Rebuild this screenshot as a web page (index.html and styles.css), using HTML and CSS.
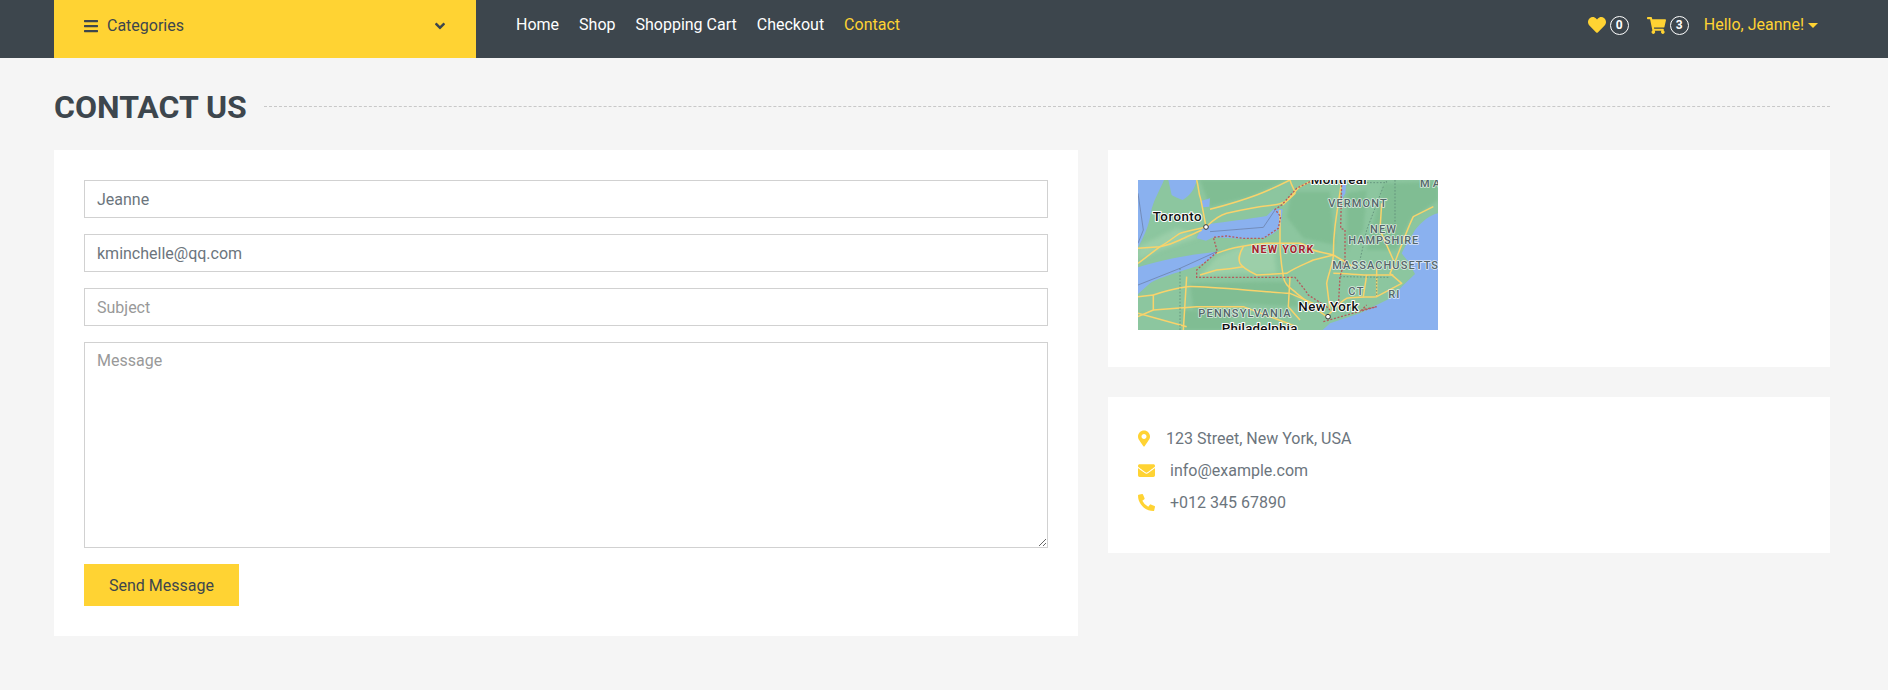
FILE: index.html
```html
<!DOCTYPE html>
<html lang="en">
<head>
<meta charset="utf-8">
<title>Contact</title>
<link rel="stylesheet" href="styles.css">
</head>
<body>
<header class="navbar">
  <div class="categories">
    <svg class="ico ico-bars" viewBox="0 0 448 512"><path d="M16 132h416c8.837 0 16-7.163 16-16V76c0-8.837-7.163-16-16-16H16C7.163 60 0 67.163 0 76v40c0 8.837 7.163 16 16 16zm0 160h416c8.837 0 16-7.163 16-16v-40c0-8.837-7.163-16-16-16H16c-8.837 0-16 7.163-16 16v40c0 8.837 7.163 16 16 16zm0 160h416c8.837 0 16-7.163 16-16v-40c0-8.837-7.163-16-16-16H16c-8.837 0-16 7.163-16 16v40c0 8.837 7.163 16 16 16z"/></svg>
    <span class="categories-label">Categories</span>
    <svg class="ico ico-angle" viewBox="0 0 320 512"><path d="M143 352.3L7 216.3c-9.4-9.4-9.4-24.6 0-33.9l22.6-22.6c9.4-9.4 24.6-9.4 33.9 0l96.4 96.4 96.4-96.4c9.4-9.4 24.6-9.4 33.9 0l22.6 22.6c9.4 9.4 9.4 24.6 0 33.9l-136 136c-9.2 9.4-24.4 9.4-33.8 0z"/></svg>
  </div>
  <nav class="nav-links">
    <a class="nav-link">Home</a>
    <a class="nav-link">Shop</a>
    <a class="nav-link">Shopping Cart</a>
    <a class="nav-link">Checkout</a>
    <a class="nav-link active">Contact</a>
  </nav>
  <div class="nav-right">
    <a class="nav-icon">
      <svg class="ico ico-heart" viewBox="0 0 512 512"><path d="M462.3 62.6C407.5 15.9 326 24.3 275.7 76.2L256 96.5l-19.7-20.3C186.1 24.3 104.5 15.9 49.7 62.6c-62.8 53.6-66.1 149.8-9.9 207.9l193.5 199.8c12.5 12.9 32.8 12.9 45.3 0l193.5-199.8c56.3-58.1 53-154.3-9.8-207.9z"/></svg>
      <span class="badge">0</span>
    </a>
    <a class="nav-icon nav-icon-cart">
      <svg class="ico ico-cart" viewBox="0 0 576 512"><path d="M528.12 301.319l47.273-208C578.806 78.301 567.391 64 551.99 64H159.208l-9.166-44.81C147.758 8.021 137.93 0 126.529 0H24C10.745 0 0 10.745 0 24v16c0 13.255 10.745 24 24 24h69.883l70.248 343.435C147.325 417.1 136 435.222 136 456c0 30.928 25.072 56 56 56s56-25.072 56-56c0-15.674-6.447-29.835-16.824-40h209.647C430.447 426.165 424 440.326 424 456c0 30.928 25.072 56 56 56s56-25.072 56-56c0-22.172-12.888-41.332-31.579-50.405l5.517-24.276c3.413-15.018-8.002-29.319-23.403-29.319H218.117l-6.545-32h293.145c11.206 0 20.92-7.754 23.403-18.681z"/></svg>
      <span class="badge">3</span>
    </a>
    <a class="user-menu">Hello, Jeanne!<span class="caret"></span></a>
  </div>
</header>

<main class="page">
  <h2 class="section-title"><span class="section-title-text">CONTACT US</span><span class="section-title-line"></span></h2>
  <div class="columns">
    <form class="card form-card">
      <input class="field" type="text" value="Jeanne" placeholder="Name">
      <input class="field" type="email" value="kminchelle@qq.com" placeholder="Email">
      <input class="field" type="text" placeholder="Subject">
      <textarea class="field field-message" placeholder="Message"></textarea>
      <button class="send-btn" type="button">Send Message</button>
    </form>
    <div class="side">
      <section class="card map-card">
        <svg class="map" viewBox="114 90 900 450" preserveAspectRatio="xMidYMid slice">
          <rect class="m-land" x="114" y="90" width="900" height="450"/>
          <g class="m-forests">
            <path d="M575 125 L690 125 L705 285 L610 265 L560 200 Z"/>
            <path d="M740 130 L800 120 L790 240 L740 300 Z"/>
            <path d="M850 100 L1014 95 L1014 150 L930 210 L890 300 L800 300 Z"/>
            <path d="M270 400 L560 395 L600 470 L420 460 L280 480 Z"/>
            <path d="M250 480 L400 490 L380 540 L250 540 Z"/>
            <path d="M300 90 L560 90 L450 140 L330 170 Z"/>
          </g>
          <g class="m-lights">
            <path d="M114 290 L230 235 L300 260 L180 300 L114 330 Z"/>
            <path d="M350 320 L430 285 L520 290 L530 370 L420 370 L300 380 Z"/>
          </g>
          <g class="m-waters">
            <path d="M114 90 L192 90 C180 120 160 150 152 190 C148 225 130 265 114 292 Z"/>
            <path d="M205 90 L290 90 C285 115 272 135 248 150 C235 145 222 140 215 135 Z"/>
            <path d="M305 152 L330 145 L328 170 L308 172 Z"/>
            <path d="M290 265 C295 250 305 232 330 222 C380 215 440 208 500 198 L522 176 L548 178 L542 230 C530 245 515 255 495 263 L430 266 L340 262 L318 272 Z"/>
            <path d="M114 352 C170 335 250 315 352 305 C335 325 320 335 300 345 C260 360 180 380 150 400 L114 432 Z"/>
            <path d="M726 90 L740 90 L736 130 L725 150 Z"/>
            <path d="M1014 190 C990 195 965 215 945 240 C935 260 925 270 905 310 L925 335 L945 372 L905 410 L880 440 L780 490 L690 520 L668 540 L1014 540 Z"/>
          </g>
          <g class="m-roads">
            <path d="M318 231 C345 205 360 195 380 190 S470 170 520 165 S570 135 600 110 L640 90"/>
            <path d="M290 90 C296 110 296 130 300 140 S312 200 318 231"/>
            <path d="M330 178 C380 165 430 150 470 135 S550 100 570 90 C575 110 585 120 585 130 L548 165"/>
            <path d="M318 231 C280 240 250 245 240 250 S200 280 180 290 L114 340"/>
            <path d="M114 295 L180 290 C205 285 220 280 240 270 S285 250 305 240"/>
            <path d="M350 310 C380 298 400 293 420 290 S470 282 500 280 L600 280 C620 285 630 295 640 300 S680 310 700 315 L760 350"/>
            <path d="M540 180 L540 280 C540 320 545 350 550 380 S575 415 590 430 L640 470 L680 500"/>
            <path d="M430 290 C418 310 415 330 420 340 S450 365 470 375 L560 370 C590 350 620 340 640 330 L700 315"/>
            <path d="M430 350 C400 355 370 358 350 360 L300 375"/>
            <path d="M725 95 C718 140 710 190 705 230 S700 290 700 315 S685 370 680 400 L690 480"/>
            <path d="M700 370 C740 370 770 375 800 375 L880 375"/>
            <path d="M680 500 C700 480 720 455 740 445 C770 440 800 442 830 440 L905 400 L870 370 C880 350 885 335 895 310 S925 230 940 200 L1000 170"/>
            <path d="M845 160 L840 240 L880 330"/>
            <path d="M114 440 L160 435 L160 480 L114 500"/>
            <path d="M160 435 C200 420 230 415 260 410 S480 425 570 430 L640 460"/>
            <path d="M114 490 L260 530"/>
            <path d="M160 480 L290 470 L430 470 L590 530"/>
            <path d="M260 380 L250 540"/>
            <path d="M570 380 L565 470 L600 510"/>
            <path d="M800 375 L790 440"/>
            <path d="M830 340 L830 440"/>
          </g>
          <g class="m-lines">
            <path d="M114 130 L130 240 L114 280"/>
            <path d="M330 245 L490 232 L525 180"/>
            <path d="M114 405 L240 355 L350 305"/>
          </g>
          <g class="m-state">
            <path d="M240 355 L240 540"/>
            <path d="M885 90 L885 250"/>
            <path d="M850 110 L800 240 L780 330"/>
            <path d="M720 380 L870 382"/>
            <path d="M830 380 L830 440"/>
            <path d="M800 98 L860 98 L858 90"/>
          </g>
          <g class="m-border">
            <path d="M640 90 L590 115 L545 165 L525 178 L542 200 L535 235 L490 265 L430 265 L380 258 L340 262 L352 305 L290 360 L290 382 L585 382 L615 420 L625 435 L680 470 L690 480"/>
            <path d="M725 95 L722 235 L735 240 L735 330 L720 380 L715 470"/>
            <path d="M670 515 L830 470 L785 480 L800 465"/>
          </g>
          <circle class="m-dot" cx="318" cy="231" r="7"/>
          <circle class="m-dot" cx="684" cy="500" r="7"/>
          <g class="m-labels">
            <text class="m-city" x="158" y="212" textLength="147">Toronto</text>
            <text class="m-city" x="595" y="482" textLength="180">New York</text>
            <text class="m-city" x="632" y="102" textLength="168">Montreal</text>
            <text class="m-city" x="365" y="548" textLength="227">Philadelphia</text>
            <text class="m-ny" x="455" y="310" textLength="185">NEW YORK</text>
            <text class="m-state-name" x="685" y="170" textLength="175">VERMONT</text>
            <text class="m-state-name" x="960" y="112" textLength="60">MA</text>
            <text class="m-state-name" x="810" y="248" textLength="78">NEW</text>
            <text class="m-state-name" x="745" y="282" textLength="210">HAMPSHIRE</text>
            <text class="m-state-name" x="697" y="356" textLength="317">MASSACHUSETTS</text>
            <text class="m-state-name" x="745" y="435" textLength="45">CT</text>
            <text class="m-state-name" x="865" y="443" textLength="33">RI</text>
            <text class="m-state-name" x="295" y="500" textLength="277">PENNSYLVANIA</text>
          </g>
        </svg>
      </section>
      <section class="card info-card">
        <p class="info-row">
          <svg class="ico ico-info ico-marker" viewBox="0 0 384 512"><path d="M172.268 501.67C26.97 291.031 0 269.413 0 192 0 85.961 85.961 0 192 0s192 85.961 192 192c0 77.413-26.97 99.031-172.268 309.67-9.535 13.774-29.93 13.773-39.464 0zM192 272c44.183 0 80-35.817 80-80s-35.817-80-80-80-80 35.817-80 80 35.817 80 80 80z"/></svg>123 Street, New York, USA</p>
        <p class="info-row">
          <svg class="ico ico-info" viewBox="0 0 512 512"><path d="M502.3 190.8c3.9-3.1 9.7-.2 9.7 4.7V400c0 26.5-21.5 48-48 48H48c-26.5 0-48-21.5-48-48V195.6c0-5 5.7-7.8 9.7-4.7 22.4 17.4 52.1 39.5 154.1 113.6 21.1 15.4 56.7 47.8 92.2 47.6 35.7.3 72-32.8 92.3-47.6 102-74.1 131.6-96.3 154-113.7zM256 320c23.2.4 56.6-29.2 73.4-41.4 132.7-96.3 142.8-104.7 173.4-128.7 5.8-4.5 9.2-11.5 9.2-18.9v-19c0-26.5-21.5-48-48-48H48C21.5 64 0 85.5 0 112v19c0 7.4 3.4 14.3 9.2 18.9 30.6 23.9 40.7 32.4 173.4 128.7 16.8 12.2 50.2 41.8 73.4 41.4z"/></svg>info@example.com</p>
        <p class="info-row">
          <svg class="ico ico-info" viewBox="0 0 512 512"><path d="M497.39 361.8l-112-48a24 24 0 0 0-28 6.9l-49.6 60.6A370.66 370.66 0 0 1 130.6 204.11l60.6-49.6a23.94 23.94 0 0 0 6.9-28l-48-112A24.16 24.16 0 0 0 122.6.61l-104 24A24 24 0 0 0 0 48c0 256.5 207.9 464 464 464a24 24 0 0 0 23.4-18.6l24-104a24.29 24.29 0 0 0-14.01-27.6z"/></svg>+012 345 67890</p>
      </section>
    </div>
  </div>
</main>
</body>
</html>
```

FILE: styles.css
```css
* { box-sizing: border-box; }
html, body { margin: 0; padding: 0; }
body {
  background: #f5f5f5;
  color: #6c757d;
  font-family: Roboto, "Liberation Sans", sans-serif;
  font-size: 16px;
  line-height: 24px;
  min-height: 690px;
  overflow: hidden;
}
.ico { display: block; fill: currentColor; flex: none; }

.navbar {
  display: flex;
  align-items: flex-start;
  height: 58px;
  padding: 0 70px 0 54px;
  background: #3d464d;
}
.categories {
  display: flex;
  align-items: center;
  width: 422px;
  height: 58px;
  padding: 0 30px 6px;
  background: #ffd333;
  color: #3d464d;
}
.ico-bars { width: 14px; height: 16px; margin-right: 9px; }
.categories-label { flex: 1; }
.ico-angle { width: 10px; height: 16px; margin-right: 1px; }

.nav-links { display: flex; margin-left: 30px; padding-top: 13px; }
.nav-link { padding: 0 10px; color: #fff; }
.nav-link.active { color: #ffd333; }

.nav-right { display: flex; align-items: center; margin-left: auto; padding-top: 13px; color: #ffd333; }
.nav-icon { display: flex; align-items: center; }
.nav-icon-cart { margin-left: 18px; }
.ico-heart { width: 18px; height: 18px; }
.ico-cart { width: 19px; height: 17px; }
.badge {
  width: 19px;
  height: 19px;
  margin-left: 4px;
  border: 1px solid #fff;
  border-radius: 50%;
  color: #fff;
  font-size: 12px;
  font-weight: 700;
  line-height: 17px;
  text-align: center;
}
.user-menu { display: flex; align-items: center; margin-left: 15px; }
.caret {
  width: 0;
  height: 0;
  margin-left: 4px;
  border-top: 5px solid #ffd333;
  border-left: 5px solid transparent;
  border-right: 5px solid transparent;
}

.page { padding: 0 58px 54px 54px; }
.section-title {
  display: flex;
  align-items: center;
  margin: 0;
  padding: 26px 0 20px;
  color: #3d464d;
  font-size: 32px;
  font-weight: 700;
  line-height: 46px;
}
.section-title-text { padding-right: 17px; }
.section-title-line { flex: 1; margin-top: -2px; border-top: 1px dashed #c8c8c8; }

.columns { display: grid; grid-template-columns: 1024fr 722fr; gap: 30px; align-items: start; }
.card { background: #fff; padding: 30px; }

.form-card { display: flex; flex-direction: column; align-items: flex-start; }
.field {
  display: block;
  width: 100%;
  height: 38px;
  margin-bottom: 16px;
  padding: 6px 12px;
  border: 1px solid #d1d1d1;
  border-radius: 0;
  background: #fff;
  color: #6c757d;
  font-family: inherit;
  font-size: 16px;
  line-height: 24px;
  outline: none;
}
.field::placeholder { color: #999; opacity: 1; }
.field-message { height: 206px; }
.send-btn {
  height: 42px;
  padding: 0 25px;
  border: 0;
  background: #ffd333;
  color: #3d464d;
  font-family: inherit;
  font-size: 16px;
}

.side { display: flex; flex-direction: column; gap: 30px; }
.map-card { padding-bottom: 37px; }
.map { display: block; width: 300px; height: 150px; }
.m-land { fill: #8cc69f; }
.m-forests { fill: #80bd93; filter: blur(5px); }
.m-lights { fill: #9ccfa9; filter: blur(6px); }
.m-waters { fill: #8ab1ef; }
.m-roads path { fill: none; stroke: #f9d36b; stroke-width: 4.5; stroke-linejoin: round; }
.m-lines path { fill: none; stroke: #67799f; stroke-width: 2; }
.m-state path { fill: none; stroke: #5f8d78; stroke-width: 2.5; stroke-dasharray: 5 5; }
.m-border path { fill: none; stroke: #b55a5c; stroke-width: 4; stroke-dasharray: 6 5; }
.m-dot { fill: #fff; stroke: #333; stroke-width: 3; }
.m-labels text {
  font-family: Roboto, "Liberation Sans", sans-serif;
  paint-order: stroke;
  stroke: #fff;
  stroke-linejoin: round;
}
.m-city { fill: #111; font-size: 40px; font-weight: 500; stroke-width: 6; }
.m-ny { fill: #a5222c; font-size: 32px; font-weight: 700; stroke-width: 5; stroke-opacity: .7; }
.m-state-name { fill: #55666a; font-size: 33px; font-weight: 500; stroke-width: 5; stroke-opacity: .7; }

.info-row { display: flex; align-items: center; margin: 0 0 8px; }
.ico-info { width: 17px; height: 17px; margin-top: -2px; margin-right: 15px; color: #ffd333; }
.ico-marker { width: 12px; margin-right: 16px; }
```
